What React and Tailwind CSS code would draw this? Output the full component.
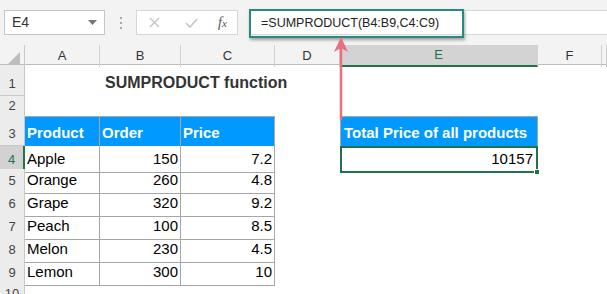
import React from 'react'

const cols = ['A', 'B', 'C', 'D', 'E', 'F', '']

const data = [
  ['Apple', 150, 7.2],
  ['Orange', 260, 4.8],
  ['Grape', 320, 9.2],
  ['Peach', 100, 8.5],
  ['Melon', 230, 4.5],
  ['Lemon', 300, 10],
]

const grid = 'grid grid-cols-[25px_75px_81px_94px_65px_198px_64px_1fr]'

const RowHead = ({ n, active }) => (
  <div
    className={`flex items-end justify-center pb-[2px] text-[13px] text-[#444] border-r border-b border-[#c8c8c8] ${
      active ? 'bg-[#d2d2d2] border-r-2 border-r-[#217346] text-[#217346]' : 'bg-[#ececec]'
    }`}
  >
    {n}
  </div>
)

export default function App() {
  return (
    <div className="relative w-[607px] h-[294px] overflow-hidden bg-white font-['Liberation_Sans',Arial,sans-serif] text-black">
      {/* Ribbon / formula bar */}
      <div className="h-[45px] bg-[#f3f3f3] flex items-start pt-[10px]">
        <div className="ml-[4px] w-[101px] h-[25px] bg-white border border-[#c6c6c6] flex items-center justify-between px-[7px]">
          <span className="text-[14px] text-[#333]">E4</span>
          <svg width="9" height="5" viewBox="0 0 9 5">
            <path d="M0 0h9L4.5 5z" fill="#777" />
          </svg>
        </div>
        <div className="w-[31px] h-[25px] flex flex-col items-center justify-center gap-[3px]">
          <span className="w-[2px] h-[2px] bg-[#aaa]" />
          <span className="w-[2px] h-[2px] bg-[#aaa]" />
          <span className="w-[2px] h-[2px] bg-[#aaa]" />
        </div>
        <div className="w-[102px] h-[25px] bg-white border border-[#d6d6d6] flex items-center">
          <svg className="ml-[12px]" width="11" height="11" viewBox="0 0 11 11">
            <path d="M1 1l9 9M10 1l-9 9" stroke="#c4c4c4" strokeWidth="1.4" />
          </svg>
          <svg className="ml-[25px]" width="13" height="10" viewBox="0 0 13 10">
            <path d="M1 5l4 4 7-8" stroke="#c4c4c4" strokeWidth="1.6" fill="none" />
          </svg>
          <span className="ml-[20px] text-[14px] italic text-[#555] font-['Liberation_Serif',serif]">
            f<span className="text-[11px]">x</span>
          </span>
        </div>
        <div className="relative ml-[11px] flex-1 h-[25px] bg-white border-y border-l border-[#d6d6d6]">
          <div className="absolute left-[-1px] top-[-2px] w-[215px] h-[29px] border-[2.5px] border-[#2a8880] shadow-[1px_2px_3px_rgba(0,0,0,0.35)] flex items-center pl-[10px] text-[12.5px] text-[#222] whitespace-nowrap">
            =SUMPRODUCT(B4:B9,C4:C9)
          </div>
        </div>
      </div>

      {/* Column headers */}
      <div className={`${grid} h-[20px] bg-[#f3f3f3] border-b border-[#bcbcbc]`}>
        <div className="relative border-r border-[#c8c8c8]">
          <svg className="absolute right-[4px] bottom-[3px]" width="12" height="12" viewBox="0 0 12 12">
            <path d="M12 0v12H0z" fill="#bdbdbd" />
          </svg>
        </div>
        {cols.map((c, i) => (
          <div
            key={i}
            className={`flex items-center justify-center text-[13px] text-[#333] border-r border-[#d0d0d0] ${
              c === 'E' ? 'bg-[#d3d3d3] border-b-2 border-b-[#217346] text-[#217346]' : ''
            }`}
          >
            {c}
          </div>
        ))}
      </div>

      {/* Row 1 */}
      <div className={`${grid} h-[31px]`}>
        <RowHead n={1} />
        <div className="col-span-3 flex items-end pb-[1px] pl-[80px] text-[16px] font-bold text-[#333] whitespace-nowrap">
          SUMPRODUCT function
        </div>
      </div>

      {/* Row 2 */}
      <div className={`${grid} h-[20px]`}>
        <RowHead n={2} />
      </div>

      {/* Row 3 headers */}
      <div className={`${grid} h-[30px]`}>
        <RowHead n={3} />
        {['Product', 'Order', 'Price'].map((h) => (
          <div
            key={h}
            className="bg-[#0099ff] border-t border-r border-[#a6a6a6] flex items-end pl-[2px] pb-[2px] text-[15px] font-bold text-white"
          >
            {h}
          </div>
        ))}
        <div />
        <div className="bg-[#0099ff] border-t border-x border-[#a6a6a6] flex items-end pl-[3px] pb-[2px] text-[15px] font-bold text-white whitespace-nowrap">
          Total Price of all products
        </div>
      </div>

      {/* Data rows */}
      {data.map((r, i) => (
        <div key={i} className={`${grid} h-[23px]`}>
          <RowHead n={i + 4} active={i === 0} />
          <div className="border-r border-b border-[#a6a6a6] flex items-end pl-[2px] pb-[1px] text-[15px]">{r[0]}</div>
          <div className="border-r border-b border-[#a6a6a6] flex items-end justify-end pr-[2px] pb-[1px] text-[15px]">{r[1]}</div>
          <div className="border-r border-b border-[#a6a6a6] flex items-end justify-end pr-[2px] pb-[1px] text-[15px]">{r[2]}</div>
          <div />
          {i === 0 ? (
            <div className="relative border-2 border-[#217346] flex items-end justify-end pr-[3px] text-[15px]">
              10157
              <span className="absolute right-[-4px] bottom-[-4px] w-[6px] h-[6px] bg-[#217346] border border-white" />
            </div>
          ) : (
            <div />
          )}
        </div>
      ))}

      {/* Row 10 */}
      <div className={`${grid} h-[20px]`}>
        <RowHead n={10} />
      </div>

      {/* Annotation arrow */}
      <svg className="absolute left-[333px] top-[36px]" width="16" height="86" viewBox="0 0 16 86">
        <path d="M8 10V84" stroke="#e86f7e" strokeWidth="2.5" />
        <path d="M1 16L8 1l7 15L8 12z" fill="#e86f7e" />
      </svg>
    </div>
  )
}
